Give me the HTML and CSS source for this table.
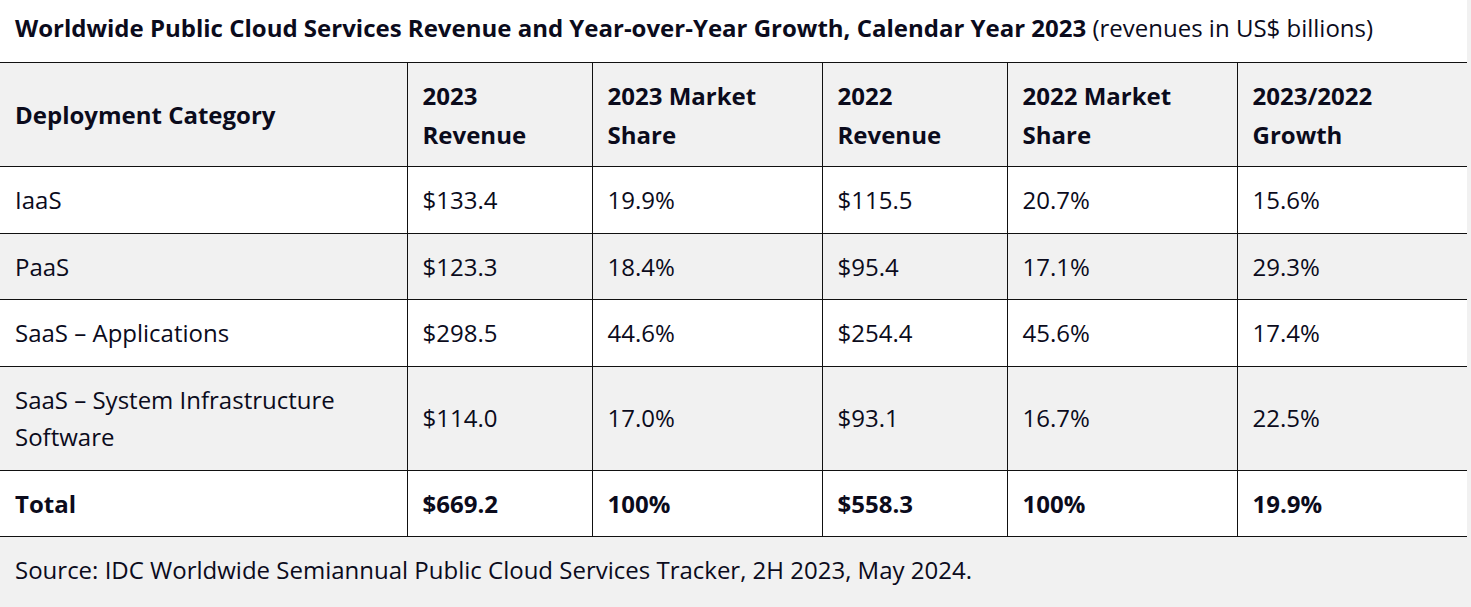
FILE: index.html
```html
<!DOCTYPE html>
<html lang="en">
<head>
<meta charset="utf-8">
<title>Worldwide Public Cloud Services Revenue</title>
<link rel="stylesheet" href="styles.css">
</head>
<body>
<figure class="wrap">
  <div class="title"><strong>Worldwide Public Cloud Services Revenue and Year-over-Year Growth, Calendar Year 2023</strong> (revenues in US$ billions)</div>
  <table class="data">
    <colgroup>
      <col class="c1"><col class="c2"><col class="c3"><col class="c2"><col class="c3"><col class="c3">
    </colgroup>
    <thead>
      <tr class="shade">
        <th>Deployment Category</th>
        <th>2023<br>Revenue</th>
        <th>2023 Market<br>Share</th>
        <th>2022<br>Revenue</th>
        <th>2022 Market<br>Share</th>
        <th>2023/2022<br>Growth</th>
      </tr>
    </thead>
    <tbody>
      <tr><td>IaaS</td><td>$133.4</td><td>19.9%</td><td>$115.5</td><td>20.7%</td><td>15.6%</td></tr>
      <tr class="shade"><td>PaaS</td><td>$123.3</td><td>18.4%</td><td>$95.4</td><td>17.1%</td><td>29.3%</td></tr>
      <tr><td>SaaS – Applications</td><td>$298.5</td><td>44.6%</td><td>$254.4</td><td>45.6%</td><td>17.4%</td></tr>
      <tr class="shade"><td>SaaS – System Infrastructure<br>Software</td><td>$114.0</td><td>17.0%</td><td>$93.1</td><td>16.7%</td><td>22.5%</td></tr>
      <tr class="total"><td>Total</td><td>$669.2</td><td>100%</td><td>$558.3</td><td>100%</td><td>19.9%</td></tr>
    </tbody>
  </table>
  <figcaption class="source">Source: IDC Worldwide Semiannual Public Cloud Services Tracker, 2H 2023, May 2024.</figcaption>
</figure>
</body>
</html>
```
FILE: styles.css
```css
html, body {
  margin: 0;
  padding: 0;
  background: #f1f1f1;
}
body {
  font-family: "Open Sans", "Noto Sans", sans-serif;
  color: #0b0b1c;
}
.wrap {
  margin: 0;
  width: 1467px;
  background: #ffffff;
}
.title {
  height: 62px;
  box-sizing: border-box;
  padding: 9px 15px 0;
  font-size: 24px;
  line-height: 37.5px;
  white-space: nowrap;
}
.title strong {
  font-weight: 700;
}
.data {
  width: 1467px;
  border-collapse: collapse;
  table-layout: fixed;
  font-size: 24px;
}
.c1 { width: 407px; }
.c2 { width: 185px; }
.c3 { width: 230px; }
.data th,
.data td {
  text-align: left;
  vertical-align: middle;
  padding: 14px 15px;
  line-height: 37.5px;
  border-top: 1px solid #111111;
  border-bottom: 1px solid #111111;
  border-left: 1px solid #111111;
}
.data th:first-child,
.data td:first-child {
  border-left: none;
}
.data th {
  font-weight: 700;
  padding: 12.5px 15px;
  line-height: 39px;
}
.shade {
  background: #f1f1f1;
}
.total td {
  font-weight: 700;
}
.source {
  background: #f1f1f1;
  padding: 14px 15px;
  height: 71px;
  box-sizing: border-box;
  font-size: 24px;
  line-height: 37.5px;
}
```
